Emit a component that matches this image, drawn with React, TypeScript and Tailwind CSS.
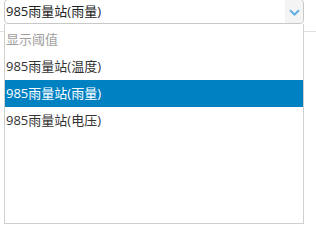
const options = ['985雨量站(温度)', '985雨量站(雨量)', '985雨量站(电压)'];

export default function App() {
  const selected = '985雨量站(雨量)';

  return (
    <div
      className="relative h-[234px] w-[316px] overflow-hidden bg-white text-[13px] text-[#333]"
      style={{ fontFamily: '"Open Sans", "Noto Sans CJK SC", sans-serif' }}
    >
      {/* panel line behind the dropdown */}
      <div className="absolute left-0 right-0 top-[31px] h-px bg-[#e0e0e0]" />

      <div className="relative ml-[4px] w-[300px]">
        {/* select box */}
        <div className="-mt-px flex h-[25px] items-center rounded-[4px] border border-[#c8c8c8] bg-white">
          <span className="flex-1 pl-[1px] leading-none text-[#222]">{selected}</span>
          <span className="flex h-full w-[18px] items-center justify-center rounded-r-[4px] bg-[#f4f4f4]">
            <svg width="11" height="7" viewBox="0 0 11 7" className="mt-[1px]">
              <path d="M1 1.2 L5.5 5.5 L10 1.2" fill="none" stroke="#62aee8" strokeWidth="2" />
            </svg>
          </span>
        </div>

        {/* dropdown list */}
        <div className="h-[200px] border border-t-0 border-[#cfcfcf] bg-white pt-[2px]">
          <div className="flex h-[27px] items-center pl-[1px] text-[#a0a0a0]">显示阈值</div>
          {options.map((o) => (
            <div
              key={o}
              className={
                o === selected
                  ? 'flex h-[27px] items-center bg-[#0081c2] pl-[1px] text-white'
                  : 'flex h-[27px] items-center pl-[1px] text-[#333]'
              }
            >
              {o}
            </div>
          ))}
        </div>
      </div>
    </div>
  );
}
